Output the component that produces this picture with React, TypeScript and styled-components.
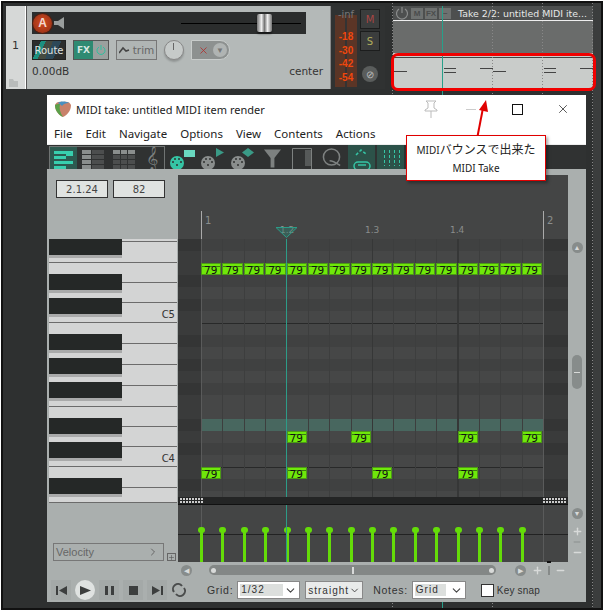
import React from 'react';
import styled, { createGlobalStyle } from 'styled-components';
import { ChevronDown, ChevronRight, Plus, Minus, X } from 'lucide-react';

const GlobalStyle = createGlobalStyle`
  html, body { margin: 0; padding: 0; background: #fff; }
  * { box-sizing: border-box; }
  body { font-family: "Liberation Sans", Arial, sans-serif; }
`;

const Frame = styled.div`
  position: relative;
  width: 602px;
  height: 609px;
  margin: 1px 0 0 1px;
  padding: 3px 8px 0 3px;
  border: 2px solid #111;
  background: #2e3030;
  overflow: hidden;
`;

const RightStrip = styled.div`
  position: absolute;
  right: 0;
  top: 0;
  bottom: 0;
  width: 8px;
  background: #3b3d3d;
`;

/* ---------- track ---------- */
const TrackRow = styled.div`
  position: relative;
  display: flex;
  height: 83px;
`;

const TrackIndex = styled.div`
  position: relative;
  width: 20px;
  display: flex;
  justify-content: center;
  padding-top: 33px;
  background: #d6d8d7;
  border-right: 1px solid #fff;
  font: 11px "DejaVu Sans", sans-serif;
  color: #333;
`;

const FolderIcon = styled.svg`
  position: absolute;
  left: 3px;
  bottom: 2px;
`;

const TrackPanel = styled.div`
  width: 305px;
  padding: 6px 24px 0 5px;
  background: #b4b9b8;
  border-left: 1px solid #555;
  border-right: 1px solid #888;
`;

const NameBar = styled.div`
  display: flex;
  align-items: center;
  height: 22px;
  background: #2b2d2d;
  overflow: visible;
`;

const ArmButton = styled.div`
  width: 19px;
  height: 19px;
  border-radius: 50%;
  margin-left: 1px;
  display: flex;
  align-items: center;
  justify-content: center;
  background: radial-gradient(circle at 50% 45%, #d34a22, #8e2c12);
  box-shadow: 0 0 0 1px #521d0e;
  color: #f3d9cf;
  font: bold 12px "Liberation Sans", sans-serif;
`;

const FaderTrack = styled.div`
  position: relative;
  width: 120px;
  height: 1px;
  margin-left: 115px;
  background: #000;
`;

const FaderThumb = styled.div`
  position: absolute;
  left: 76px;
  top: -9px;
  width: 15px;
  height: 18px;
  border-radius: 2px;
  background: linear-gradient(90deg, #777, #eee 30%, #777 50%, #eee 70%, #777);
  box-shadow: 0 2px 2px rgba(0, 0, 0, 0.5);
`;

const ButtonRow = styled.div`
  display: flex;
  align-items: center;
  height: 20px;
  margin-top: 6px;
`;

const RouteButton = styled.div`
  width: 34px;
  height: 20px;
  display: flex;
  align-items: center;
  justify-content: center;
  background: linear-gradient(115deg, #2b2d2d 20%, #1d9080 20%, #1d9080 32%, #454a40 32%, #454a40 50%, #2d4858 50%, #2d4858 70%, #2b2d2d 70%);
  border: 1px solid #222;
  color: #dfe3e2;
  font: 10px "DejaVu Sans", sans-serif;
`;

const FxButton = styled.div`
  display: flex;
  width: 36px;
  height: 20px;
  margin-left: 7px;
  border: 1px solid #555;
  font: bold 9px "DejaVu Sans", sans-serif;
`;

const FxLabel = styled.div`
  width: 19px;
  display: flex;
  align-items: center;
  justify-content: center;
  background: #2f8a72;
  color: #d5e6e0;
`;

const FxPower = styled.div`
  flex: 1;
  display: flex;
  align-items: center;
  justify-content: center;
  background: #9aa09e;
`;

const TrimButton = styled.div`
  display: flex;
  align-items: center;
  justify-content: center;
  gap: 2px;
  width: 41px;
  height: 20px;
  margin-left: 7px;
  border: 1px solid #777;
  background: #b0b5b4;
  color: #666;
  font: 10.5px "DejaVu Sans", sans-serif;
`;

const Knob = styled.div`
  position: relative;
  width: 20px;
  height: 20px;
  margin-left: 7px;
  border-radius: 50%;
  border: 1px solid #888;
  background: #c6cac9;
  box-shadow: 0 2px 2px rgba(0, 0, 0, 0.2);
  &::after {
    content: '';
    position: absolute;
    left: 8px;
    top: 2px;
    width: 1px;
    height: 7px;
    background: #666;
  }
`;

const EnvelopeToggle = styled.div`
  display: flex;
  align-items: center;
  justify-content: space-between;
  width: 39px;
  height: 20px;
  margin-left: 7px;
  padding: 0 2px 0 6px;
  border: 1px solid #c8cccb;
  border-radius: 0 10px 10px 0;
  background: #8d9190;
`;

const EnvelopeCaret = styled.div`
  width: 14px;
  height: 14px;
  border-radius: 50%;
  display: flex;
  align-items: center;
  justify-content: center;
  background: #b0b4b3;
  color: #777;
  font-size: 8px;
`;

const ReadoutRow = styled.div`
  display: flex;
  justify-content: space-between;
  margin: 5px -17px 0 0;
  font: 10.5px "DejaVu Sans", sans-serif;
  color: #333;
`;

const MeterBlock = styled.div`
  display: flex;
  width: 54px;
  padding: 3px 4px 2px 4px;
  gap: 3px;
  background: #303232;
`;

const MeterScale = styled.div`
  position: relative;
  width: 22px;
  margin-top: 6px;
  padding-top: 16px;
  display: flex;
  flex-direction: column;
  align-items: center;
  gap: 2.6px;
  background: linear-gradient(90deg, #5b3526 45%, #333 45%, #333 55%, #5b3526 55%);
  font: bold 10px/11px "Liberation Sans", sans-serif;
  color: #f0470c;
`;

const InfLabel = styled.div`
  position: absolute;
  top: -6px;
  left: -2px;
  width: 26px;
  text-align: center;
  font: 10px/11px "DejaVu Sans", sans-serif;
  color: #777;
`;

const MeterButtons = styled.div`
  display: flex;
  flex-direction: column;
  align-items: center;
  gap: 2px;
`;

const SoloButton = styled.div<{ $color: string }>`
  width: 20px;
  height: 20px;
  display: flex;
  align-items: center;
  justify-content: center;
  background: #3b3d3d;
  border: 1px solid #1c1d1d;
  color: ${(p) => p.$color};
  font: 10px "DejaVu Sans", sans-serif;
`;

const PhaseButton = styled.div`
  width: 16px;
  height: 16px;
  margin-top: 13px;
  border-radius: 50%;
  background: #5a5d5c;
  display: flex;
  align-items: center;
  justify-content: center;
  color: #bbb;
  font-size: 10px;
`;

const Arrange = styled.div`
  position: relative;
  flex: 1;
  padding: 0 0 0 8px;
`;

const Item = styled.div`
  height: 83px;
  display: flex;
  flex-direction: column;
`;

const ItemHeader = styled.div`
  display: flex;
  align-items: center;
  gap: 2px;
  height: 15px;
  padding-left: 2px;
  background: #4d4f4f;
  border-bottom: 1px solid #eee;
  color: #e6e8e7;
  font: 9.4px "DejaVu Sans", sans-serif;
  white-space: nowrap;
`;

const ItemTitle = styled.span`
  margin-left: 5px;
`;

const ItemChip = styled.div`
  width: 12px;
  height: 11px;
  display: flex;
  align-items: center;
  justify-content: center;
  background: #6e7170;
  color: #4a4c4c;
  font: bold 8px "Liberation Sans", sans-serif;
`;

const ItemDark = styled.div`
  height: 32px;
  background: #6a6c6b;
`;

const ItemMidi = styled.div`
  position: relative;
  flex: 1;
  background: #c9ccca;
`;

const ItemDash = styled.div`
  position: absolute;
  height: 1px;
  background: #444;
`;

const DottedLine = styled.div<{ $h: number }>`
  position: absolute;
  top: 0;
  width: 1px;
  height: ${(p) => p.$h}px;
  background: repeating-linear-gradient(180deg, #888 0 1px, transparent 1px 3px);
`;

const Playhead = styled.div`
  position: absolute;
  left: 439px;
  top: 3px;
  bottom: 0;
  width: 1px;
  background: #27a08a;
`;

const FrameDots = styled(DottedLine)`
  top: auto;
  bottom: 0;
`;

const RedBox = styled.div`
  position: absolute;
  left: 388px;
  top: 50px;
  width: 205px;
  height: 38px;
  border: 3px solid #f00000;
  border-radius: 7px;
`;

/* ---------- midi window ---------- */
const MidiWindow = styled.div`
  position: absolute;
  left: 44px;
  top: 92px;
  width: 539px;
  height: 507px;
  display: flex;
  flex-direction: column;
  background: #aaafae;
`;

const TitleBar = styled.div`
  display: flex;
  align-items: center;
  height: 28px;
  padding-left: 8px;
  background: #fff;
  color: #222;
  font: 11px "Noto Sans", sans-serif;
`;

const TitleText = styled.div`
  margin-left: 5px;
  flex: 1;
  white-space: nowrap;
`;

const WindowControls = styled.div`
  display: flex;
  align-items: center;
`;

const WindowControl = styled.div<{ $w: number }>`
  width: ${(p) => p.$w}px;
  display: flex;
  justify-content: center;
`;

const MinimizeBar = styled.div`
  width: 10px;
  height: 1px;
  background: #ccc;
`;

const MaximizeBox = styled.div`
  width: 11px;
  height: 11px;
  border: 1px solid #111;
`;

const MenuBar = styled.div`
  display: flex;
  align-items: center;
  gap: 13px;
  height: 22px;
  padding-left: 7px;
  background: #fff;
  color: #222;
  font: 11.5px "Noto Sans", sans-serif;
  border-bottom: 1px solid #eee;
`;

const Toolbar = styled.div`
  display: flex;
  align-items: flex-start;
  height: 24px;
  background: #303232;
  overflow: hidden;
`;

const ViewGroup = styled.div`
  display: flex;
  width: 116px;
  height: 24px;
  margin: 1px 0 0 2px;
  border: 1px solid #707473;
  border-bottom: none;
`;

const ViewCell = styled.div<{ $on?: boolean; $w: number }>`
  width: ${(p) => p.$w}px;
  height: 23px;
  display: flex;
  justify-content: center;
  align-items: flex-start;
  padding-top: 3px;
  background: ${(p) => (p.$on ? '#2d5a50' : 'transparent')};
`;

const ClefCell = styled.div`
  width: 25px;
  text-align: center;
  font: 21px/23px "DejaVu Sans", sans-serif;
  color: #7d8180;
`;

const ToolIcon = styled.svg<{ $gap?: number }>`
  flex: none;
  margin-left: ${(p) => p.$gap ?? 0}px;
`;

const ActiveTool = styled.div<{ $gap: number }>`
  width: 27px;
  height: 24px;
  margin-left: ${(p) => p.$gap}px;
  background: #2c5249;
  display: flex;
  justify-content: center;
`;

const Body = styled.div`
  flex: 1;
  display: flex;
  flex-direction: column;
  min-height: 0;
`;

const MainRow = styled.div`
  display: flex;
  height: 393px;
`;

const LeftColumn = styled.div`
  width: 131px;
  display: flex;
  flex-direction: column;
`;

const PosRow = styled.div`
  display: flex;
  gap: 5px;
  height: 70px;
  padding: 11px 0 0 9px;
`;

const PosBox = styled.div`
  width: 52px;
  height: 18px;
  display: flex;
  align-items: center;
  justify-content: center;
  background: #e0e3e1;
  border: 1px solid #333;
  color: #444;
  font: 10px "DejaVu Sans", sans-serif;
`;

const Piano = styled.div`
  position: relative;
  width: 128px;
  margin-left: 2px;
  display: flex;
  flex-direction: column;
`;

const WhiteKey = styled.div<{ $h: number }>`
  position: relative;
  height: ${(p) => p.$h}px;
  background: #d3d4d4;
  border-bottom: 1px solid #6b6b6b;
`;

const KeyName = styled.span`
  position: absolute;
  right: 2px;
  bottom: 2px;
  color: #333;
  font: 10px "DejaVu Sans", sans-serif;
`;

const BlackKey = styled.div`
  position: absolute;
  left: 0;
  width: 73px;
  height: 16px;
  background: #252827;
  box-shadow: 0 3px 0 #a9aaaa;
`;

const LaneControls = styled.div`
  display: flex;
  align-items: flex-end;
  gap: 3px;
  margin: auto 0 1px 6px;
`;

const LaneSelect = styled.div`
  display: flex;
  align-items: center;
  justify-content: space-between;
  width: 111px;
  height: 18px;
  padding: 0 4px 0 2px;
  border: 1px solid #777;
  color: #666;
  font: 11px "Liberation Sans", sans-serif;
`;

const LaneAdd = styled.div`
  width: 9px;
  height: 8px;
  display: flex;
  align-items: center;
  justify-content: center;
  border: 1px solid #666;
  color: #555;
`;

const RollPanel = styled.div`
  width: 390px;
  margin-top: 6px;
  display: flex;
  flex-direction: column;
  background: #444545;
`;

const Ruler = styled.div`
  position: relative;
  height: 64px;
  color: #8a8d8c;
  font: 9px "DejaVu Sans", sans-serif;
`;

const BarTick = styled.div`
  position: absolute;
  bottom: 0;
  width: 1px;
  height: 28px;
  background: #aaa;
`;

const BarLine = styled.div`
  position: absolute;
  top: 0;
  bottom: 0;
  width: 1px;
  background: #5a5b5b;
`;

const RulerLabel = styled.span<{ $big?: boolean }>`
  position: absolute;
  font-size: ${(p) => (p.$big ? 10 : 9)}px;
`;

const PlayMarker = styled.svg`
  position: absolute;
  left: 97px;
  bottom: 1px;
`;

const NoteArea = styled.div`
  position: relative;
  height: 258px;
  overflow: hidden;
`;

const PitchRow = styled.div<{ $black: boolean; $hi: boolean; $line: boolean }>`
  position: relative;
  height: 12px;
  background: linear-gradient(
    90deg,
    ${(p) => (p.$black ? '#343535' : '#3a3b3b')} 23px,
    ${(p) => (p.$hi ? '#48675f' : p.$black ? '#404141' : '#464747')} 23px,
    ${(p) => (p.$hi ? '#48675f' : p.$black ? '#404141' : '#464747')} 365px,
    ${(p) => (p.$black ? '#343535' : '#3a3b3b')} 365px
  );
  &::before {
    content: '';
    display: ${(p) => (p.$line ? 'block' : 'none')};
    position: absolute;
    left: 23px;
    top: 0;
    width: 342px;
    height: 1px;
    background: #282929;
  }
`;

const GridLines = styled.div`
  position: absolute;
  left: 23px;
  top: 0;
  bottom: 0;
  width: 342px;
  background:
    repeating-linear-gradient(90deg, #363737 0 1px, transparent 1px 85.5px),
    repeating-linear-gradient(90deg, #3d3e3e 0 1px, transparent 1px 21.375px);
`;

const Note = styled.div`
  position: absolute;
  height: 12px;
  padding: 1px 0 0 2px;
  background: linear-gradient(180deg, #6fe80a 0 2px, #3d7a12 2px 3px, #6fe80a 3px);
  border: 1px solid #4c9a16;
  color: #111;
  font: 10.5px/10px "DejaVu Sans", sans-serif;
`;

const RollPlayhead = styled.div`
  position: absolute;
  left: 108px;
  top: 0;
  bottom: 0;
  width: 1px;
  background: #2d9c88;
`;

const LaneDivider = styled.div`
  display: flex;
  align-items: center;
  justify-content: space-between;
  height: 8px;
  padding: 0 2px;
  background: #242525;
  border-bottom: 1px solid #111;
`;

const Dots = styled.div`
  position: relative;
  width: 23px;
  height: 5px;
  background: repeating-linear-gradient(90deg, #ccc 0 2px, transparent 2px 3px);
  &::after {
    content: '';
    position: absolute;
    left: 0;
    right: 0;
    top: 2px;
    height: 1px;
    background: #242525;
  }
`;

const VelocityLane = styled.div`
  position: relative;
  flex: 1;
  overflow: hidden;
`;

const LaneMid = styled.div`
  position: absolute;
  left: 0;
  right: 0;
  top: 29px;
  height: 1px;
  background: #222;
`;

const Stem = styled.div`
  position: absolute;
  top: 24px;
  bottom: 0;
  width: 3px;
  background: #64dc08;
  &::before {
    content: '';
    position: absolute;
    left: -2px;
    top: -2px;
    width: 7px;
    height: 6px;
    border-radius: 3px;
    background: #64dc08;
  }
`;

const RightRail = styled.div`
  width: 18px;
  display: flex;
  flex-direction: column;
  align-items: center;
  padding-top: 73px;
`;

const RoundButton = styled.div`
  width: 11px;
  height: 11px;
  flex: none;
  border-radius: 50%;
  background: #878c8b;
  display: flex;
  align-items: center;
  justify-content: center;
  color: #d8dad9;
  font-size: 7px;
  line-height: 7px;
`;

const ScrollArrow = styled(RoundButton)`
  margin-right: 1px;
`;

const RailThumb = styled.div`
  width: 10px;
  height: 34px;
  margin-top: 102px;
  border-radius: 5px;
  background: #878c8b;
  display: flex;
  align-items: center;
  justify-content: center;
  &::after {
    content: '';
    width: 6px;
    height: 1px;
    background: #d8dad9;
  }
`;

const RailSpacer = styled.div`
  height: 119px;
`;

const ZoomStack = styled.div`
  display: flex;
  flex-direction: column;
  align-items: center;
  margin-top: 7px;
  color: #d8dad9;
`;

const ScrollRow = styled.div`
  display: flex;
  align-items: center;
  height: 16px;
  padding-left: 134px;
`;

const ScrollTrack = styled.div`
  display: flex;
  align-items: center;
  justify-content: space-between;
  width: 287px;
  height: 10px;
  margin-left: 17px;
  padding: 0 2px;
  border-radius: 5px;
  background: #838786;
`;

const ScrollDot = styled.div`
  width: 5px;
  height: 5px;
  border-radius: 50%;
  background: #d8dad9;
`;

const ScrollMark = styled.div`
  width: 2px;
  height: 7px;
  background: #d8dad9;
`;

const ScrollEnd = styled.div`
  display: flex;
  align-items: center;
  gap: 5px;
  margin-left: 19px;
  color: #d8dad9;
`;

const ZoomMark = styled.div`
  position: relative;
  width: 2px;
  height: 9px;
  background: #868a89;
  &::before {
    content: '';
    position: absolute;
    left: -1px;
    top: -5px;
    width: 4px;
    height: 2px;
    background: #111;
  }
`;

const Transport = styled.div`
  display: flex;
  align-items: center;
  height: 24px;
  padding-left: 4px;
  color: #333;
  font: 10.5px "Liberation Sans", sans-serif;
  letter-spacing: 0.7px;
`;

const TransportButton = styled.div<{ $round?: boolean }>`
  width: 20px;
  height: 20px;
  margin-right: 4px;
  display: flex;
  align-items: center;
  justify-content: center;
  border-radius: ${(p) => (p.$round ? '50%' : '0')};
  background: ${(p) => (p.$round ? '#dfe2e1' : '#a4a9a8')};
  color: #3c3e3e;
`;

const FieldLabel = styled.span<{ $left: number }>`
  margin-left: ${(p) => p.$left}px;
  white-space: nowrap;
`;

const KeySnapLabel = styled(FieldLabel)`
  font-size: 10px;
  letter-spacing: 0.2px;
`;

const SelectBox = styled.div<{ $w: number; $left: number; $plain?: boolean }>`
  display: flex;
  align-items: center;
  justify-content: space-between;
  flex: none;
  width: ${(p) => p.$w}px;
  height: 18px;
  margin-left: ${(p) => p.$left}px;
  padding: 2px;
  background: ${(p) => (p.$plain ? '#e9ebea' : '#fff')};
  border: 1px solid #888;
  color: #333;
  font: 10px "Liberation Sans", sans-serif;
  letter-spacing: 1px;
`;

const SelectValue = styled.div<{ $w: number }>`
  width: ${(p) => p.$w}px;
  height: 100%;
  padding-left: 1px;
  line-height: 12px;
  background: #dcdfdd;
`;

const CheckBox = styled.div`
  width: 13px;
  height: 13px;
  flex: none;
  margin-left: 15px;
  background: #fff;
  border: 1px solid #333;
`;

/* ---------- callout ---------- */
const Callout = styled.div`
  position: absolute;
  left: 403px;
  top: 132px;
  width: 140px;
  height: 46px;
  padding-top: 5px;
  background: #fff;
  border: 1px solid #e00000;
  box-shadow: 2px 2px 3px rgba(0, 0, 0, 0.35);
  color: #222;
  text-align: center;
  font: 10px/18px "Noto Sans", "Noto Sans CJK JP", sans-serif;
`;

const CalloutKana = styled.span`
  font-size: 12px;
`;

const CalloutArrow = styled.svg`
  position: absolute;
  left: 465px;
  top: 96px;
`;

const keyHeights = [3, 21, 20, 20, 20, 21, 21, 21, 21, 20, 20, 20, 21, 15];
const blackKeys = [0, 35, 59, 95, 119, 143, 179, 203, 239];
const blackRows = [0, 3, 5, 8, 10, 12, 15, 17, 20];
const menus = ['File', 'Edit', 'Navigate', 'Options', 'View', 'Contents', 'Actions'];
const stepWidth = 21.375;
const noteRows: { row: number; steps: number[] }[] = [
  { row: 2, steps: Array.from({ length: 16 }, (_, i) => i) },
  { row: 16, steps: [4, 7, 12, 15] },
  { row: 19, steps: [0, 4, 8, 12] },
];
const itemDashes = [
  { x: 1, y: 18, w: 13 },
  { x: 51, y: 15, w: 12 },
  { x: 51, y: 19, w: 12 },
  { x: 87, y: 15, w: 13 },
  { x: 100, y: 18, w: 13 },
  { x: 151, y: 15, w: 12 },
  { x: 151, y: 19, w: 12 },
  { x: 187, y: 15, w: 13 },
];

const MidiDin = ({ color, gap }: { color: string; gap?: number }) => (
  <ToolIcon $gap={gap} width="14" height="24" viewBox="0 0 14 24">
    <circle cx="7" cy="18" r="7" fill={color} />
    <circle cx="3" cy="17" r="1" fill="#303232" />
    <circle cx="5" cy="14" r="1" fill="#303232" />
    <circle cx="9" cy="14" r="1" fill="#303232" />
    <circle cx="11" cy="17" r="1" fill="#303232" />
    <circle cx="7" cy="20" r="1" fill="#303232" />
  </ToolIcon>
);

const App: React.FC = () => {
  return (
    <Frame>
      <GlobalStyle />
      <RightStrip />
      <TrackRow>
        <TrackIndex>
          1
          <FolderIcon width="9" height="8" viewBox="0 0 9 8">
            <path d="M0 0h4l1 2h4v6H0z" fill="#b9bcbb" />
          </FolderIcon>
        </TrackIndex>
        <TrackPanel>
          <NameBar>
            <ArmButton>A</ArmButton>
            <svg width="12" height="12" viewBox="0 0 12 12" style={{ marginLeft: 2 }}>
              <path d="M0 4h4l6-4v12L4 8H0z" fill="#9a9e9d" />
            </svg>
            <FaderTrack>
              <FaderThumb />
            </FaderTrack>
          </NameBar>
          <ButtonRow>
            <RouteButton>Route</RouteButton>
            <FxButton>
              <FxLabel>FX</FxLabel>
              <FxPower>
                <svg width="10" height="10" viewBox="0 0 10 10" fill="none" stroke="#2fbf9f" strokeWidth="1">
                  <path d="M3 2a4 4 0 1 0 4 0M5 0v5" />
                </svg>
              </FxPower>
            </FxButton>
            <TrimButton>
              <svg width="12" height="8" viewBox="0 0 12 8" fill="none" stroke="#444" strokeWidth="1.6">
                <path d="M0 7l4-5 3 3 3-1" />
              </svg>
              trim
            </TrimButton>
            <Knob />
            <EnvelopeToggle>
              <X size={11} color="#b03030" strokeWidth={1.8} />
              <EnvelopeCaret>▼</EnvelopeCaret>
            </EnvelopeToggle>
          </ButtonRow>
          <ReadoutRow>
            <span>0.00dB</span>
            <span>center</span>
          </ReadoutRow>
        </TrackPanel>
        <MeterBlock>
          <MeterScale>
            <InfLabel>-inf</InfLabel>
            <span>-18</span>
            <span>-30</span>
            <span>-42</span>
            <span>-54</span>
          </MeterScale>
          <MeterButtons>
            <SoloButton $color="#a84644">M</SoloButton>
            <SoloButton $color="#b0ad5c">S</SoloButton>
            <PhaseButton>⊘</PhaseButton>
          </MeterButtons>
        </MeterBlock>
        <Arrange>
          <Item>
            <ItemHeader>
              <svg width="14" height="14" viewBox="0 0 14 14" fill="none" stroke="#8a8c8c" strokeWidth="1.2">
                <path d="M4 3a5.5 5.5 0 1 0 6 0M7 1v6" />
              </svg>
              <ItemChip>M</ItemChip>
              <ItemChip>FX</ItemChip>
              <ItemChip>~</ItemChip>
              <ItemTitle>Take 2/2: untitled MIDI ite...</ItemTitle>
            </ItemHeader>
            <ItemDark />
            <ItemMidi>
              <ItemDash style={{ left: 0, right: 0, top: 4 }} />
              {itemDashes.map((d, i) => (
                <ItemDash key={i} style={{ left: d.x, top: d.y, width: d.w }} />
              ))}
            </ItemMidi>
          </Item>
        </Arrange>
      </TrackRow>
      <DottedLine $h={92} style={{ left: 389 }} />
      <DottedLine $h={92} style={{ left: 489 }} />
      <DottedLine $h={92} style={{ left: 539 }} />
      <FrameDots $h={8} style={{ left: 389 }} />
      <FrameDots $h={8} style={{ left: 489 }} />
      <DottedLine $h={605} style={{ left: 589 }} />
      <Playhead />
      <RedBox />
      <MidiWindow>
        <TitleBar>
          <svg width="16" height="16" viewBox="2 2 16 16">
            <path d="M10 3C6 2 3 3 2 6c0 6 4 10 8 12 4-2 8-6 8-12-1-3-4-4-8-3z" fill="#c9826b" />
            <path d="M2 6c0 6 4 10 8 12-3-4-4-9-3-13-2 0-4 0-5 1z" fill="#5ba04a" />
            <path d="M5 4c2-2 8-2 11 0-3 0-6 1-7 3-1-1-2-2-4-3z" fill="#4a90c0" />
          </svg>
          <TitleText>MIDI take: untitled MIDI item render</TitleText>
          <WindowControls>
            <WindowControl $w={34}>
              <svg width="16" height="18" viewBox="0 0 16 18" fill="#fff" stroke="#bbb">
                <path d="M3 1h10l-2 2v5l3 2v1H2v-1l3-2V3zM8 11v7" />
              </svg>
            </WindowControl>
            <WindowControl $w={46}>
              <MinimizeBar />
            </WindowControl>
            <WindowControl $w={46}>
              <MaximizeBox />
            </WindowControl>
            <WindowControl $w={46}>
              <X size={14} color="#111" strokeWidth={1.2} />
            </WindowControl>
          </WindowControls>
        </TitleBar>
        <MenuBar>
          {menus.map((m) => (
            <span key={m}>{m}</span>
          ))}
        </MenuBar>
        <Toolbar>
          <ViewGroup>
            <ViewCell $on $w={27}>
              <svg width="19" height="20" viewBox="0 0 19 20" fill="#38cfae">
                <path d="M0 1h19v3H0zM0 6h12v3H0zM0 11h19v3H0zM0 16h12v3H0zM12 4h7v2h-7z" />
              </svg>
            </ViewCell>
            <ViewCell $w={32}>
              <svg width="22" height="20" viewBox="0 0 22 20">
                <path d="M0 0h9v4H0zM0 5h9v4H0zM0 10h9v4H0zM0 15h9v4H0z" fill="#8a8e8d" />
                <path d="M10 0h12v4H10zM10 5h12v4H10zM10 10h12v4H10zM10 15h12v4H10z" fill="#4c4e4e" />
              </svg>
            </ViewCell>
            <ViewCell $w={30}>
              <svg width="22" height="20" viewBox="0 0 22 20">
                <path d="M0 0h7v4H0zM8 0h6v4H8zM15 0h7v4h-7z" fill="#8a8e8d" />
                <path d="M0 5h7v4H0zM8 5h6v4H8zM15 5h7v4h-7zM0 10h7v4H0zM8 10h6v4H8zM15 10h7v4h-7zM0 15h7v4H0zM8 15h6v4H8zM15 15h7v4h-7z" fill="#4c4e4e" />
              </svg>
            </ViewCell>
            <ClefCell>𝄞</ClefCell>
          </ViewGroup>
          <MidiDin color="#35c5a5" gap={5} />
          <ToolIcon width="12" height="24" viewBox="0 0 12 24">
            <rect x="0" y="5" width="11" height="7" fill="#6ad9c0" />
          </ToolIcon>
          <MidiDin color="#8a8e8d" gap={5} />
          <ToolIcon width="10" height="24" viewBox="0 0 10 24">
            <path d="M1 3l8 4.5L1 12z" fill="#3a9a86" />
          </ToolIcon>
          <MidiDin color="#8a8e8d" gap={6} />
          <ToolIcon $gap={-4} width="14" height="24" viewBox="0 0 14 24">
            <path d="M7 3l6 4.5L7 12 1 7.5z" fill="#3a9a86" />
          </ToolIcon>
          <ToolIcon $gap={8} width="19" height="24" viewBox="0 0 20 24">
            <path d="M1 4h18l-7 9v10H8V13z" fill="#7d8180" />
          </ToolIcon>
          <ToolIcon $gap={10} width="20" height="24" viewBox="0 0 20 24" fill="none" stroke="#7d8180">
            <path d="M.5 3.5h19v21H.5zM13 6h6M13 8h6M13 10h6M13 12h6M13 14h6M13 16h6M13 18h6M13 20h6" />
          </ToolIcon>
          <ToolIcon $gap={10} width="19" height="24" viewBox="0 0 20 24" fill="none" stroke="#7d8180" strokeWidth="1.6">
            <circle cx="10" cy="12" r="8.5" />
            <path d="M8 16c4 0 8 3 11 5" />
          </ToolIcon>
          <ActiveTool $gap={7}>
            <svg width="20" height="24" viewBox="0 0 20 24" fill="none" stroke="#35c5a5" strokeWidth="1.5">
              <path d="M4 10l5-5 5 4" strokeDasharray="3 2" />
              <rect x="2" y="17" width="16" height="8" rx="4" />
              <path d="M6 20h8" />
            </svg>
          </ActiveTool>
          <ActiveTool $gap={2}>
            <svg width="20" height="24" viewBox="0 0 20 24" stroke="#35c5a5" strokeWidth="1" strokeDasharray="3 2">
              <path d="M3.5 5v16M8.5 5v16M13.5 5v16M18.5 5v16" />
            </svg>
          </ActiveTool>
        </Toolbar>
        <Body>
          <MainRow>
            <LeftColumn>
              <PosRow>
                <PosBox>2.1.24</PosBox>
                <PosBox>82</PosBox>
              </PosRow>
              <Piano>
                {keyHeights.map((h, i) => (
                  <WhiteKey key={i} $h={h}>
                    {i === 4 && <KeyName>C5</KeyName>}
                    {i === 11 && <KeyName>C4</KeyName>}
                  </WhiteKey>
                ))}
                {blackKeys.map((top) => (
                  <BlackKey key={top} style={{ top }} />
                ))}
              </Piano>
              <LaneControls>
                <LaneSelect>
                  Velocity
                  <ChevronRight size={12} color="#666" />
                </LaneSelect>
                <LaneAdd>
                  <Plus size={7} />
                </LaneAdd>
              </LaneControls>
            </LeftColumn>
            <RollPanel>
              <Ruler>
                <BarTick style={{ left: 23 }} />
                <BarTick style={{ left: 365 }} />
                <RulerLabel $big style={{ left: 27, top: 40 }}>1</RulerLabel>
                <RulerLabel style={{ left: 102, top: 50 }}>1.2</RulerLabel>
                <RulerLabel style={{ left: 187, top: 50 }}>1.3</RulerLabel>
                <RulerLabel style={{ left: 272, top: 50 }}>1.4</RulerLabel>
                <RulerLabel $big style={{ left: 369, top: 40 }}>2</RulerLabel>
                <PlayMarker width="23" height="11" viewBox="0 0 23 11" fill="rgba(40,140,120,0.35)" stroke="#2d9c88">
                  <path d="M1 .5h21L11.5 10.5z" />
                </PlayMarker>
              </Ruler>
              <NoteArea>
                {Array.from({ length: 22 }, (_, i) => (
                  <PitchRow key={i} $black={blackRows.includes(i)} $hi={i === 15} $line={i === 7 || i === 19} />
                ))}
                <GridLines />
                <BarLine style={{ left: 23 }} />
                <BarLine style={{ left: 365 }} />
                {noteRows.flatMap((r) =>
                  r.steps.map((s) => (
                    <Note
                      key={`${r.row}-${s}`}
                      style={{ left: 23 + s * stepWidth, top: r.row * 12, width: stepWidth - 1 }}
                    >
                      79
                    </Note>
                  )),
                )}
                <RollPlayhead />
              </NoteArea>
              <LaneDivider>
                <Dots />
                <Dots />
              </LaneDivider>
              <VelocityLane>
                <LaneMid />
                <BarLine style={{ left: 23 }} />
                <BarLine style={{ left: 365 }} />
                {Array.from({ length: 16 }, (_, i) => (
                  <Stem key={i} style={{ left: 22 + i * stepWidth }} />
                ))}
                <RollPlayhead />
              </VelocityLane>
            </RollPanel>
            <RightRail>
              <RoundButton>▲</RoundButton>
              <RailThumb />
              <RailSpacer />
              <RoundButton>▼</RoundButton>
              <ZoomStack>
                <Plus size={11} strokeWidth={3} />
                <Minus size={10} strokeWidth={2} color="#868a89" />
                <Minus size={11} strokeWidth={3} />
              </ZoomStack>
            </RightRail>
          </MainRow>
          <ScrollRow>
            <RoundButton>◀</RoundButton>
            <ScrollTrack>
              <ScrollDot />
              <ScrollMark />
              <ScrollDot />
            </ScrollTrack>
            <ScrollEnd>
              <ScrollArrow>▶</ScrollArrow>
              <Plus size={11} strokeWidth={3} />
              <ZoomMark />
              <Minus size={11} strokeWidth={3} />
            </ScrollEnd>
          </ScrollRow>
          <Transport>
            <TransportButton>
              <svg width="11" height="9" viewBox="0 0 11 9" fill="currentColor"><path d="M0 0h2v9H0zM11 0v9L3 4.5z" /></svg>
            </TransportButton>
            <TransportButton $round>
              <svg width="11" height="9" viewBox="0 0 11 9" fill="currentColor"><path d="M0 0l11 4.5L0 9z" /></svg>
            </TransportButton>
            <TransportButton>
              <svg width="9" height="9" viewBox="0 0 9 9" fill="currentColor"><path d="M0 0h3v9H0zM6 0h3v9H6z" /></svg>
            </TransportButton>
            <TransportButton>
              <svg width="9" height="9" viewBox="0 0 9 9" fill="currentColor"><path d="M0 0h9v9H0z" /></svg>
            </TransportButton>
            <TransportButton>
              <svg width="11" height="9" viewBox="0 0 11 9" fill="currentColor"><path d="M0 0l8 4.5L0 9zM9 0h2v9H9z" /></svg>
            </TransportButton>
            <svg width="16" height="16" viewBox="0 0 16 16" fill="none" stroke="#4a4c4c" strokeWidth="2">
              <path d="M3 10a5 5 0 0 1 8-6M13 6a5 5 0 0 1-8 6" />
            </svg>
            <FieldLabel $left={20}>Grid:</FieldLabel>
            <SelectBox $w={63} $left={4}>
              <SelectValue $w={43}>1/32</SelectValue>
              <ChevronDown size={13} color="#444" />
            </SelectBox>
            <SelectBox $w={58} $left={5} $plain>
              straight
              <ChevronDown size={13} color="#444" />
            </SelectBox>
            <FieldLabel $left={10}>Notes:</FieldLabel>
            <SelectBox $w={54} $left={4}>
              <SelectValue $w={31}>Grid</SelectValue>
              <ChevronDown size={13} color="#444" />
            </SelectBox>
            <CheckBox />
            <KeySnapLabel $left={3}>Key snap</KeySnapLabel>
          </Transport>
        </Body>
      </MidiWindow>
      <CalloutArrow width="24" height="40" viewBox="0 0 24 40">
        <path d="M9 40L15 9" stroke="#e00000" strokeWidth="2" />
        <path d="M18 1L11 11l9 2z" fill="#e00000" />
      </CalloutArrow>
      <Callout>
        MIDI<CalloutKana>バウンスで出来た</CalloutKana>
        <br />
        MIDI Take
      </Callout>
    </Frame>
  );
};

export default App;
